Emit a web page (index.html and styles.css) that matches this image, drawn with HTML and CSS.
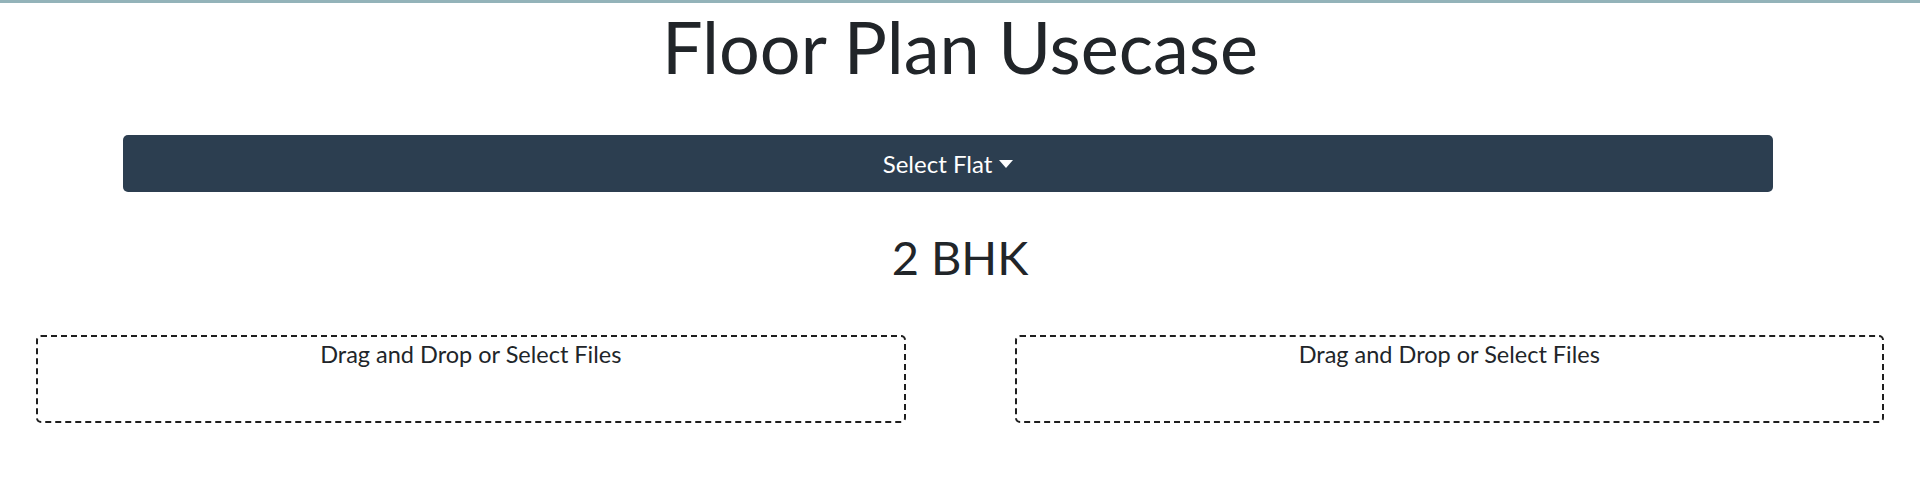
FILE: index.html
```html
<!DOCTYPE html>
<html lang="en">
<head>
<meta charset="utf-8">
<title>Floor Plan Usecase</title>
<link rel="stylesheet" href="styles.css">
</head>
<body>
<div class="topline"></div>
<main class="page">
  <h1 class="title">Floor Plan Usecase</h1>
  <div class="select-wrap">
    <button class="select-btn" type="button">Select Flat<span class="caret"></span></button>
  </div>
  <h2 class="flat">2 BHK</h2>
  <div class="uploads">
    <div class="dropzone">Drag and Drop or Select Files</div>
    <div class="dropzone">Drag and Drop or Select Files</div>
  </div>
</main>
</body>
</html>
```

FILE: styles.css
```css
html, body {
  margin: 0;
  padding: 0;
  background: #ffffff;
}
body {
  font-family: Lato, "Open Sans", "Liberation Sans", sans-serif;
  color: #212529;
}
.topline {
  height: 3px;
  background: #93b3b9;
}
.page {
  display: flex;
  flex-direction: column;
}
.title {
  margin: 0;
  font-size: 72px;
  font-weight: 400;
  line-height: 1.2;
  text-align: center;
}
.select-wrap {
  padding: 46px 147px 0 123px;
}
.select-btn {
  display: flex;
  align-items: center;
  justify-content: center;
  width: 100%;
  height: 57px;
  border: none;
  border-radius: 5px;
  background: #2c3e50;
  color: #ffffff;
  font-family: Lato, "Open Sans", "Liberation Sans", sans-serif;
  font-size: 24px;
  font-weight: 400;
  padding: 0;
}
.caret {
  display: inline-block;
  margin-left: 7px;
  width: 0;
  height: 0;
  border-left: 7px solid transparent;
  border-right: 7px solid transparent;
  border-top: 8px solid #ffffff;
}
.flat {
  margin: 37px 0 0;
  font-size: 47px;
  font-weight: 400;
  line-height: 1.2;
  text-align: center;
}
.uploads {
  display: flex;
  gap: 109px;
  padding: 49px 36px 0;
}
.dropzone {
  flex: 1;
  height: 84px;
  border: 2px dashed #1e1e1e;
  border-radius: 5px;
  text-align: center;
  font-size: 23.5px;
  line-height: 1.5;
  box-sizing: content-box;
}
```
